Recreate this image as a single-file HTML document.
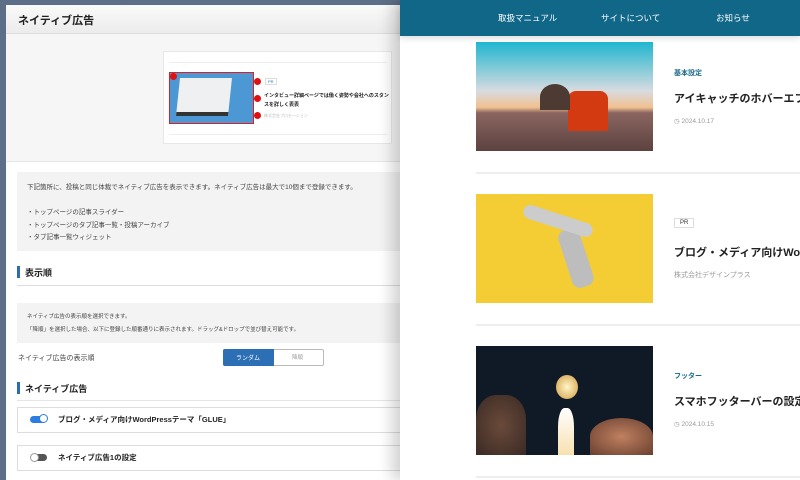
<!DOCTYPE html>
<html><head><meta charset="utf-8"><style>
*{margin:0;padding:0;box-sizing:border-box}
body{width:800px;height:480px;overflow:hidden;position:relative;background:#5d6e88;font-family:"Liberation Sans","Noto Sans CJK JP",sans-serif;color:#222}
.a{position:absolute}
.t{position:absolute;white-space:nowrap}
</style></head><body>
<!-- left panel -->
<div class="a" style="left:6px;top:5px;width:400px;height:475px;background:#fff"></div>
<div class="a" style="left:6px;top:5px;width:400px;height:29px;background:linear-gradient(#fafafa,#ececec);border-bottom:1px solid #ddd"></div>
<div class="t" style="left:18px;top:12px;font-size:11px;font-weight:bold">ネイティブ広告</div>
<div class="a" style="left:6px;top:34px;width:400px;height:128px;background:#f6f6f6;border-bottom:1px solid #e6e6e6"></div>
<div class="a" style="left:163px;top:51px;width:229px;height:93px;background:#fff;border:1px solid #e8e8e8"></div>
<div class="a" style="left:169px;top:62px;width:218px;height:1px;background:#eee"></div>
<div class="a" style="left:169px;top:134px;width:218px;height:1px;background:#eee"></div>
<div class="a" style="left:169px;top:72px;width:85px;height:52px;background:#4b98d4;border:1px solid #e02020"></div>
<div class="a" style="left:178px;top:78px;width:52px;height:38px;background:#eef0f2;transform:skewX(-6deg);border-bottom:4px solid #333"></div>
<div class="a" style="left:170px;top:73px;width:7px;height:7px;border-radius:50%;background:#d11"></div>
<div class="a" style="left:254px;top:78px;width:7px;height:7px;border-radius:50%;background:#d11"></div>
<div class="a" style="left:254px;top:95px;width:7px;height:7px;border-radius:50%;background:#d11"></div>
<div class="a" style="left:254px;top:112px;width:7px;height:7px;border-radius:50%;background:#d11"></div>
<div class="t" style="left:265px;top:78px;font-size:4px;color:#27a;border:1px solid #ddd;padding:0 2px">PR</div>
<div class="t" style="left:264px;top:92px;font-size:5px;line-height:9px;font-weight:bold">インタビュー詳細ページでは働く姿勢や会社へのスタン<br>スを詳しく表表</div>
<div class="t" style="left:264px;top:113px;font-size:4px;color:#bbb">株式会社プロモーション</div>
<div class="a" style="left:17px;top:172px;width:390px;height:79px;background:#f3f3f3"></div>
<div class="t" style="left:27px;top:182px;font-size:6.5px;line-height:12.5px;color:#444">下記箇所に、投稿と同じ体裁でネイティブ広告を表示できます。ネイティブ広告は最大で10個まで登録できます。<br><br>・トップページの記事スライダー<br>・トップページのタブ記事一覧・投稿アーカイブ<br>・タブ記事一覧ウィジェット</div>
<div class="a" style="left:17px;top:266px;width:3px;height:12px;background:#2a6db0"></div>
<div class="t" style="left:25px;top:266px;font-size:9px;font-weight:bold">表示順</div>
<div class="a" style="left:17px;top:285px;width:390px;height:1px;background:#ddd"></div>
<div class="a" style="left:17px;top:303px;width:390px;height:40px;background:#f3f3f3"></div>
<div class="t" style="left:27px;top:311px;font-size:5.5px;line-height:13px;color:#444">ネイティブ広告の表示順を選択できます。<br>「降順」を選択した場合、以下に登録した順番通りに表示されます。ドラッグ&amp;ドロップで並び替え可能です。</div>
<div class="t" style="left:18px;top:353px;font-size:7px;color:#444">ネイティブ広告の表示順</div>
<div class="a" style="left:223px;top:349px;width:101px;height:17px;border:1px solid #bbb;border-radius:2px;background:#fff"></div>
<div class="a" style="left:223px;top:349px;width:51px;height:17px;background:#2c6fb5;border-radius:2px 0 0 2px"></div>
<div class="t" style="left:236px;top:353px;font-size:6px;color:#fff">ランダム</div>
<div class="t" style="left:292px;top:353px;font-size:5.5px;color:#999">降順</div>
<div class="a" style="left:17px;top:382px;width:3px;height:12px;background:#2a6db0"></div>
<div class="t" style="left:25px;top:382px;font-size:9px;font-weight:bold">ネイティブ広告</div>
<div class="a" style="left:17px;top:400px;width:390px;height:1px;background:#e6e6e6"></div>
<div class="a" style="left:17px;top:407px;width:390px;height:26px;border:1px solid #ddd;background:#fff"></div>
<div class="a" style="left:30px;top:416px;width:16px;height:7px;border-radius:4px;background:#2c7de0"></div>
<div class="a" style="left:39px;top:414px;width:9px;height:9px;border-radius:50%;background:#fff;border:1.5px solid #2c7de0"></div>
<div class="t" style="left:58px;top:414px;font-size:7.5px;font-weight:bold">ブログ・メディア向けWordPressテーマ「GLUE」</div>
<div class="a" style="left:17px;top:445px;width:390px;height:26px;border:1px solid #ddd;background:#fff"></div>
<div class="a" style="left:31px;top:454px;width:16px;height:7px;border-radius:4px;background:#555"></div>
<div class="a" style="left:30px;top:453px;width:9px;height:9px;border-radius:50%;background:#fff;border:1px solid #999"></div>
<div class="t" style="left:58px;top:452px;font-size:7.5px;font-weight:bold">ネイティブ広告1の設定</div>
<!-- right page -->
<div class="a" style="left:400px;top:0;width:400px;height:480px;background:#fff;box-shadow:-8px 0 14px rgba(0,0,0,.18)"></div>
<div class="a" style="left:400px;top:0;width:400px;height:36px;background:#116787;box-shadow:0 2px 6px rgba(0,0,0,.15)"></div>
<div class="t" style="left:498px;top:12px;font-size:8.5px;color:#fff">取扱マニュアル</div>
<div class="t" style="left:601px;top:12px;font-size:8.5px;color:#fff">サイトについて</div>
<div class="t" style="left:716px;top:12px;font-size:8.5px;color:#fff">お知らせ</div>
<div class="a" style="left:476px;top:42px;width:177px;height:109px;background:linear-gradient(180deg,#1fb6d0 0%,#d8dbe0 45%,#f0c090 60%,#8a6560 65%,#5c4240 100%)"></div>
<div class="a" style="left:568px;top:91px;width:40px;height:40px;background:#d43a12;border-radius:8px 8px 2px 2px"></div>
<div class="a" style="left:540px;top:84px;width:30px;height:26px;background:#4d3a32;border-radius:50% 50% 0 0"></div>
<div class="t" style="left:674px;top:68px;font-size:7px;color:#1a6a8a;font-weight:bold">基本設定</div>
<div class="t" style="left:674px;top:90px;font-size:11px;font-weight:bold">アイキャッチのホバーエフェ</div>
<div class="t" style="left:674px;top:117px;font-size:6.5px;color:#999">◷ 2024.10.17</div>
<div class="a" style="left:476px;top:172px;width:324px;height:2px;background:#eee"></div>
<div class="a" style="left:476px;top:194px;width:177px;height:109px;background:#f4cd35"></div>
<div class="a" style="left:565px;top:228px;width:22px;height:60px;background:#bdbdbd;border-radius:8px;transform:rotate(-18deg)"></div>
<div class="a" style="left:522px;top:214px;width:72px;height:14px;background:#ccc;border-radius:7px;transform:rotate(18deg)"></div>
<div class="t" style="left:674px;top:218px;font-size:6px;color:#333;border:1px solid #ddd;padding:1px 5px">PR</div>
<div class="t" style="left:674px;top:244px;font-size:11px;font-weight:bold">ブログ・メディア向けWord</div>
<div class="t" style="left:674px;top:270px;font-size:7px;color:#999">株式会社デザインプラス</div>
<div class="a" style="left:476px;top:324px;width:324px;height:2px;background:#eee"></div>
<div class="a" style="left:476px;top:346px;width:177px;height:109px;background:#0f1a26"></div>
<div class="a" style="left:476px;top:395px;width:50px;height:60px;background:radial-gradient(#6a4a3a,#3a2a24);border-radius:40% 40% 0 0"></div>
<div class="a" style="left:590px;top:418px;width:63px;height:37px;background:radial-gradient(#c08060,#6a4030);border-radius:50% 50% 0 0"></div>
<div class="a" style="left:556px;top:375px;width:22px;height:24px;border-radius:50%;background:radial-gradient(#fff6c8,#d09a40)"></div>
<div class="a" style="left:558px;top:408px;width:16px;height:47px;background:linear-gradient(#fff,#f8e0b0);border-radius:40% 40% 0 0"></div>
<div class="t" style="left:674px;top:371px;font-size:7px;color:#1a6a8a;font-weight:bold">フッター</div>
<div class="t" style="left:674px;top:393px;font-size:11px;font-weight:bold">スマホフッターバーの設定方</div>
<div class="t" style="left:674px;top:420px;font-size:6.5px;color:#999">◷ 2024.10.15</div>
<div class="a" style="left:476px;top:476px;width:324px;height:2px;background:#eee"></div>
</body></html>
